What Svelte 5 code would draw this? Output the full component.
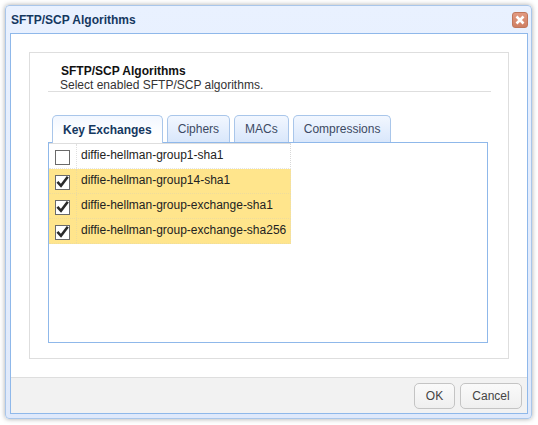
<script>
	const tabs = ['Key Exchanges', 'Ciphers', 'MACs', 'Compressions'];
	let active = $state(0);
	let rows = $state([
		{name: 'diffie-hellman-group1-sha1', on: false},
		{name: 'diffie-hellman-group14-sha1', on: true},
		{name: 'diffie-hellman-group-exchange-sha1', on: true},
		{name: 'diffie-hellman-group-exchange-sha256', on: true}
	]);
</script>

<div class="page">
	<div class="window">
		<div class="titlebar">
			<span class="title">SFTP/SCP Algorithms</span>
			<button class="close" aria-label="Close">
				<svg width="10" height="10" viewBox="0 0 10 10">
					<path d="M1.5 1.5 L8.5 8.5 M8.5 1.5 L1.5 8.5" stroke="#fff" stroke-width="2.6" fill="none"/>
				</svg>
			</button>
		</div>
		<div class="panel">
			<div class="body">
				<div class="fieldset">
					<div class="head">
						<div class="head-title">SFTP/SCP Algorithms</div>
						<div class="head-sub">Select enabled SFTP/SCP algorithms.</div>
					</div>
					<div class="tabs">
						{#each tabs as tab, i}
							<button class="tab" class:active={active === i} onclick={() => (active = i)}>{tab}</button>
						{/each}
					</div>
					<div class="content">
						<div class="grid">
							{#each rows as row}
								<label class="row" class:on={row.on}>
									<span class="cell-check">
										<input type="checkbox" bind:checked={row.on} />
										<span class="box">
											{#if row.on}
												<svg width="15" height="15" viewBox="0 0 15 15">
													<path d="M2.4 6.8 L6 10.8 L12.8 1.8" stroke="#2a2a2a" stroke-width="2.6" fill="none"/>
												</svg>
											{/if}
										</span>
									</span>
									<span class="cell-name">{row.name}</span>
								</label>
							{/each}
						</div>
					</div>
				</div>
			</div>
			<div class="footer">
				<button class="btn ok">OK</button>
				<button class="btn cancel">Cancel</button>
			</div>
		</div>
	</div>
</div>

<style>
	:global(body) {
		margin: 0;
		background: #fff;
		font-family: "Liberation Sans", Arial, sans-serif;
		font-size: 12px;
	}
	.page {
		width: 538px;
		height: 425px;
		padding: 5px 6px 6px 5px;
		box-sizing: border-box;
		background: #fff;
	}
	.window {
		height: 100%;
		box-sizing: border-box;
		display: flex;
		flex-direction: column;
		padding: 0 3px 4px 4px;
		background: linear-gradient(#e9f1ff, #dfe9fb);
		border: 1px solid #a9c6ea;
		border-radius: 4px;
		box-shadow: 0 0 5px rgba(0, 0, 0, 0.35);
	}
	.titlebar {
		height: 27px;
		flex: none;
		display: flex;
		align-items: center;
		justify-content: space-between;
		padding-left: 1px;
	}
	.title {
		font-weight: bold;
		font-size: 12px;
		color: #15385f;
	}
	.close {
		width: 16px;
		height: 16px;
		padding: 0;
		border: 1px solid #c0775c;
		border-radius: 3px;
		background: linear-gradient(#e29a82, #cf7f63);
		display: flex;
		align-items: center;
		justify-content: center;
	}
	.panel {
		flex: 1;
		display: flex;
		flex-direction: column;
		border: 1px solid #8fb8ea;
		background: #fff;
		min-height: 0;
	}
	.body {
		flex: 1;
		padding: 18px;
		min-height: 0;
	}
	.fieldset {
		box-sizing: border-box;
		height: 100%;
		border: 1px solid #dedede;
		padding: 11px 20px 15px 18px;
		display: flex;
		flex-direction: column;
	}
	.head {
		margin-right: -3px;
		padding-left: 12px;
		border-bottom: 1px solid #dedede;
		height: 28px;
		box-sizing: border-box;
		line-height: 14px;
		flex: none;
	}
	.head-title {
		font-weight: bold;
		color: #111;
		padding-left: 1px;
	}
	.head-sub {
		color: #333;
	}
	.tabs {
		display: flex;
		gap: 4px;
		margin-top: 23px;
		padding-left: 4px;
		height: 27px;
		flex: none;
		position: relative;
		z-index: 1;
	}
	.tab {
		font: 12px "Liberation Sans", Arial, sans-serif;
		color: #3c4a63;
		height: 27px;
		padding: 0 10px;
		border: 1px solid #a9c6ea;
		border-bottom: none;
		border-radius: 5px 5px 0 0;
		background: linear-gradient(#f2f7ff, #d9e7fb);
	}
	.tab.active {
		font-weight: bold;
		color: #15385f;
		height: 28px;
		background: linear-gradient(#f2f7ff 0, #fff 70%);
	}
	.content {
		flex: 1;
		border: 1px solid #8fb8ea;
		min-height: 0;
		background: #fff;
	}
	.grid {
		width: 242px;
		border-top: 1px solid #dedede;
	}
	.row {
		display: flex;
		height: 25px;
		box-sizing: border-box;
		border-bottom: 1px dotted #e4e4e4;
		border-right: 1px dotted #d8d8d8;
	}
	.row.on {
		background: #ffe58c;
		border-bottom-color: #eedc9c;
		border-right-color: #e8dcb0;
	}
	.cell-check {
		width: 28px;
		flex: none;
		border-right: 1px dotted #e0e0e0;
		box-sizing: border-box;
		padding: 6px 0 0 6px;
		position: relative;
	}
	.row.on .cell-check {
		border-right-color: #eedc9c;
	}
	.cell-check input {
		position: absolute;
		opacity: 0;
		margin: 0;
		width: 15px;
		height: 15px;
	}
	.box {
		display: block;
		width: 15px;
		height: 15px;
		box-sizing: border-box;
		border: 1px solid #6a6a6a;
		background: #fff;
	}
	.box svg {
		display: block;
		margin: -1px;
	}
	.cell-name {
		padding: 4px 0 0 4px;
		color: #222;
		line-height: 14px;
		white-space: nowrap;
	}
	.footer {
		height: 36px;
		flex: none;
		box-sizing: border-box;
		border-top: 1px solid #dedede;
		background: #f2f2f2;
		display: flex;
		justify-content: flex-end;
		align-items: center;
		gap: 5px;
		padding: 0 5px 0 0;
	}
	.btn {
		font: 12px "Liberation Sans", Arial, sans-serif;
		color: #444;
		height: 26px;
		border: 1px solid #c4c4c4;
		border-radius: 5px;
		background: linear-gradient(#fafafa, #efefef);
		padding: 0;
	}
	.ok {
		width: 41px;
	}
	.cancel {
		width: 62px;
	}
</style>
